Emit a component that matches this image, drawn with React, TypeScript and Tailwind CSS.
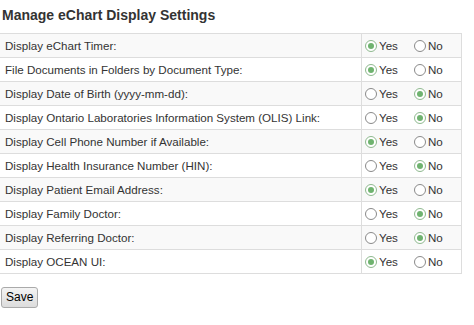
const rows: [string, boolean][] = [
  ["Display eChart Timer:", true],
  ["File Documents in Folders by Document Type:", true],
  ["Display Date of Birth (yyyy-mm-dd):", false],
  ["Display Ontario Laboratories Information System (OLIS) Link:", false],
  ["Display Cell Phone Number if Available:", true],
  ["Display Health Insurance Number (HIN):", false],
  ["Display Patient Email Address:", true],
  ["Display Family Doctor:", false],
  ["Display Referring Doctor:", false],
  ["Display OCEAN UI:", true],
];

function Radio({ on }: { on: boolean }) {
  return (
    <span
      className={
        on
          ? "flex h-[12px] w-[12px] items-center justify-center rounded-full border border-[#8fb98f] bg-white"
          : "flex h-[12px] w-[12px] items-center justify-center rounded-full border border-[#8a8a8a] bg-white"
      }
    >
      {on && <span className="h-[6px] w-[6px] rounded-full bg-[#6fb36f]" />}
    </span>
  );
}

export default function App() {
  return (
    <div className="min-h-[325px] bg-white font-['Liberation_Sans',Arial,sans-serif] text-[11.6px] text-[#333]">
      <h2 className="pl-[2px] pt-[5px] text-[14px] font-bold leading-[20px] text-[#333]">
        Manage eChart Display Settings
      </h2>
      <table className="mt-[8px] w-[462px] border-collapse border-t border-[#ddd]">
        <tbody>
          {rows.map(([label, yes], i) => (
            <tr key={label} className={i % 2 === 0 ? "bg-[#f9f9f9]" : "bg-white"}>
              <td className="h-[24px] border-b border-[#ddd] p-0 pl-[5px] align-middle leading-[14px]">{label}</td>
              <td className="h-[24px] w-[100px] border-b border-l border-r border-[#ddd] p-0 pl-[3px] align-middle">
                <div className="flex items-center leading-[14px]">
                  <Radio on={yes} />
                  <span className="ml-[2px] w-[35px]">Yes</span>
                  <Radio on={!yes} />
                  <span className="ml-[2px]">No</span>
                </div>
              </td>
            </tr>
          ))}
        </tbody>
      </table>
      <button className="ml-[1px] mt-[13px] h-[21px] rounded-[3px] border border-[#aaa] bg-gradient-to-b from-[#f4f4f4] to-[#dcdcdc] px-[4px] text-[12px] leading-[19px] text-black">
        Save
      </button>
    </div>
  );
}
